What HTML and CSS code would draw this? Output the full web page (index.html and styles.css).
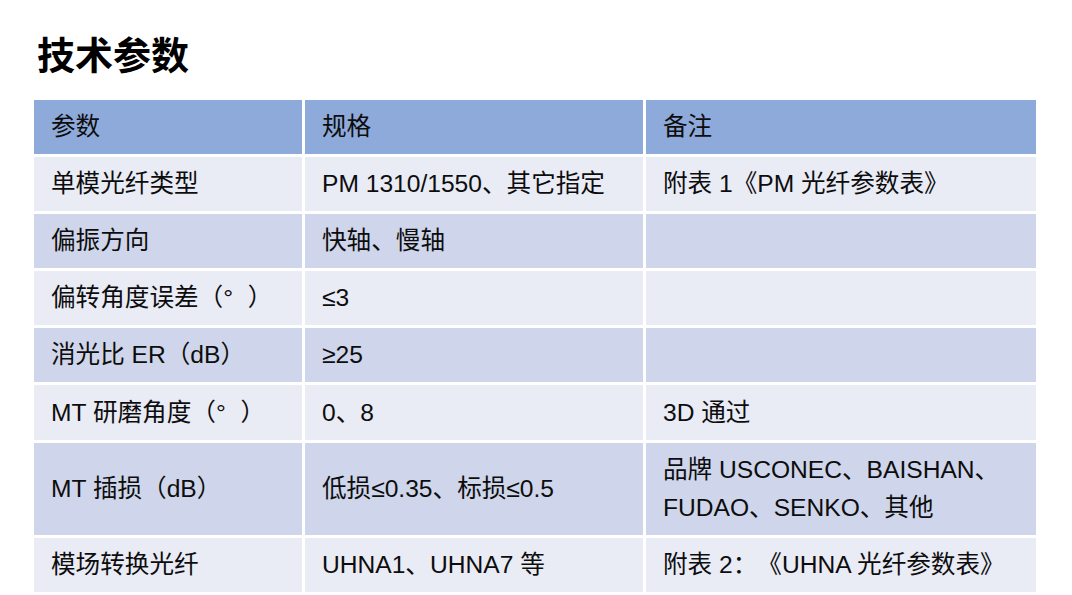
FILE: index.html
```html
<!DOCTYPE html>
<html lang="zh-CN">
<head>
<meta charset="utf-8">
<title>技术参数</title>
<link rel="stylesheet" href="styles.css">
</head>
<body>
<main class="page">
  <h1 class="title">技术参数</h1>
  <div class="table">
    <div class="cell head">参数</div>
    <div class="cell head">规格</div>
    <div class="cell head">备注</div>

    <div class="cell light">单模光纤类型</div>
    <div class="cell light">PM 1310/1550、其它指定</div>
    <div class="cell light">附表 1《PM 光纤参数表》</div>

    <div class="cell dark">偏振方向</div>
    <div class="cell dark">快轴、慢轴</div>
    <div class="cell dark"></div>

    <div class="cell light">偏转角度误差（<span class="deg">°</span>）</div>
    <div class="cell light">≤3</div>
    <div class="cell light"></div>

    <div class="cell dark">消光比 ER（dB）</div>
    <div class="cell dark">≥25</div>
    <div class="cell dark"></div>

    <div class="cell light">MT 研磨角度（<span class="deg">°</span>）</div>
    <div class="cell light">0、8</div>
    <div class="cell light">3D 通过</div>

    <div class="cell dark">MT 插损（dB）</div>
    <div class="cell dark">低损≤0.35、标损≤0.5</div>
    <div class="cell dark wrap">品牌 USCONEC、BAISHAN、<br>FUDAO、SENKO、其他</div>

    <div class="cell light">模场转换光纤</div>
    <div class="cell light">UHNA1、UHNA7 等</div>
    <div class="cell light">附表 2：《UHNA 光纤参数表》</div>
  </div>
</main>
</body>
</html>
```

FILE: styles.css
```css
html, body {
  margin: 0;
  padding: 0;
  background: #ffffff;
}

.page {
  width: 1072px;
  height: 595px;
  padding: 31px 0 0 34px;
  box-sizing: border-box;
  overflow: hidden;
  font-family: "Liberation Sans", "Noto Sans CJK SC", sans-serif;
  color: #0d0d0d;
  text-spacing-trim: space-all;
}

.title {
  margin: 0 0 0 3px;
  height: 69px;
  font-family: "Noto Sans CJK SC", sans-serif;
  font-weight: 700;
  font-size: 38px;
  line-height: 44px;
  color: #000000;
}

.table {
  display: grid;
  grid-template-columns: 268px 338px 390px;
  grid-template-rows: 54px 54px 54px 54px 54px 55px 92px 54px;
  gap: 3px;
  width: 1002px;
}

.cell {
  display: flex;
  align-items: center;
  padding: 0 16px 0 17px;
  font-size: 24.6px;
  line-height: 38px;
  white-space: nowrap;
}

.head {
  background: #8eaadb;
}

.light {
  background: #e9ebf5;
}

.dark {
  background: #cfd5ea;
}

.wrap {
  display: block;
  padding-top: 8px;
  white-space: nowrap;
}

.deg {
  display: inline-block;
  width: 1em;
}
```
